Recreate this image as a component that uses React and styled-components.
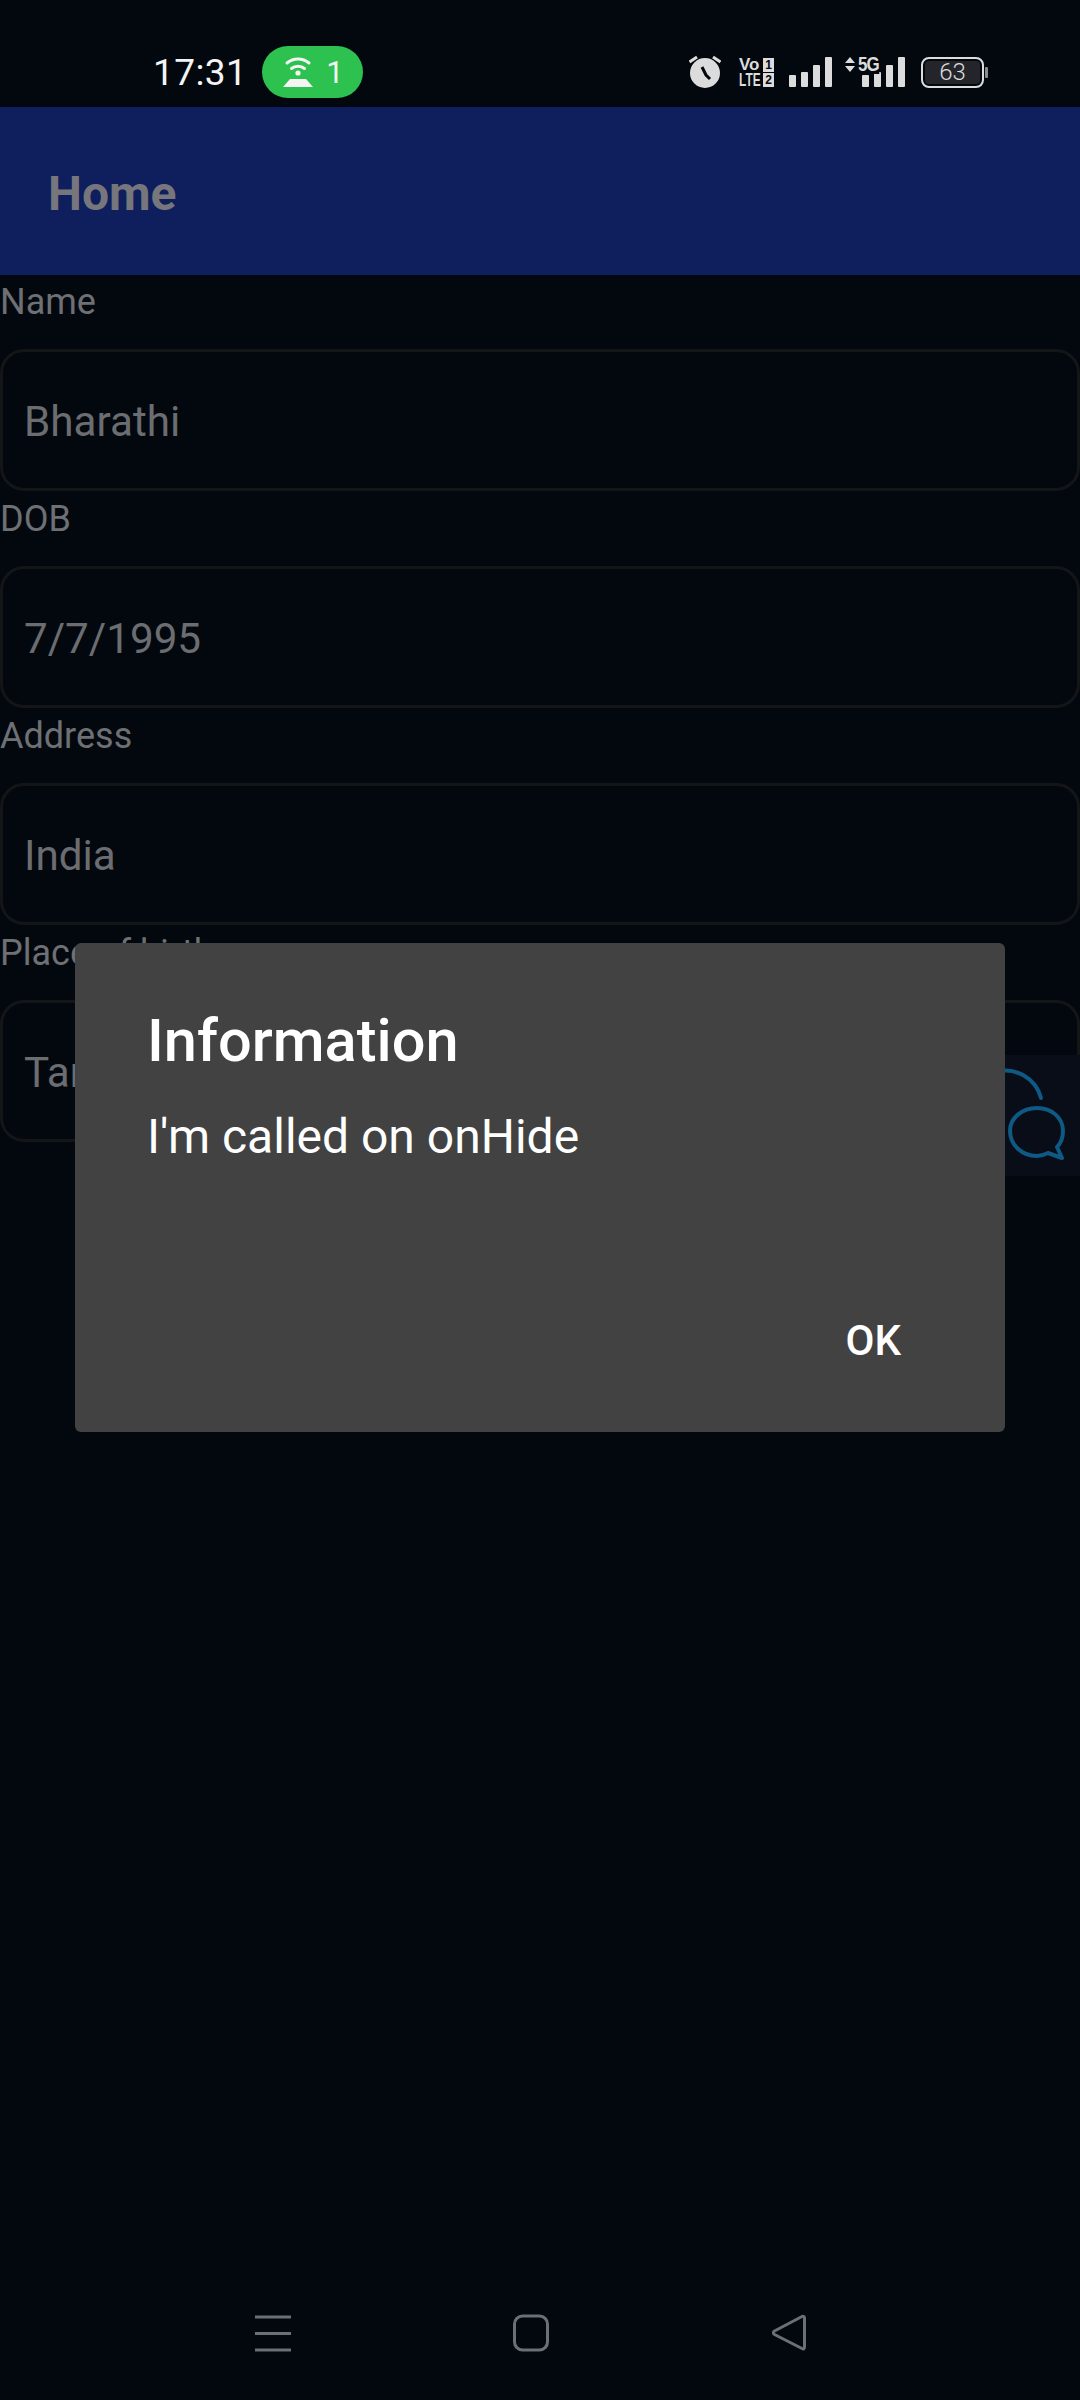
import React from "react";
import styled, { createGlobalStyle } from "styled-components";

const GlobalStyle = createGlobalStyle`
  html, body { margin: 0; padding: 0; background: #03080f; }
  * { box-sizing: border-box; }
`;

const Screen = styled.div`
  position: relative;
  width: 1080px;
  height: 2400px;
  display: flex;
  flex-direction: column;
  overflow: hidden;
  background: #03080f;
  font-family: Roboto, "Liberation Sans", sans-serif;
`;

const StatusBar = styled.div`
  height: 107px;
  flex: none;
  display: flex;
  align-items: center;
  padding: 37px 92px 0 153px;
  color: #f2f2f2;
`;

const Clock = styled.span`
  font-size: 37px;
  letter-spacing: 0.4px;
  color: #f4f4f4;
`;

const HotspotPill = styled.div`
  width: 101px;
  height: 52px;
  margin-left: 15px;
  border-radius: 26px;
  background: #2dc14f;
  display: flex;
  align-items: center;
  padding-left: 21px;
  gap: 13px;
  font-size: 31px;
  color: #f4f4f4;
`;

const StatusIcons = styled.div`
  margin-left: auto;
  display: flex;
  align-items: center;
  color: #dcdcdc;
`;

const VoLte = styled.div`
  width: 35px;
  margin-left: 18px;
  display: grid;
  grid-template-columns: 22px 11px;
  column-gap: 2px;
  row-gap: 1px;
  font-family: "Liberation Sans", sans-serif;
  font-weight: 700;
  line-height: 14px;
`;

const VoText = styled.span`
  font-size: 17px;
  white-space: nowrap;
`;

const LteText = styled.span`
  font-size: 18px;
  white-space: nowrap;
  transform: scaleX(0.66);
  transform-origin: left center;
`;

const SimTag = styled.span`
  width: 11px;
  height: 14px;
  background: #dcdcdc;
  color: #05070f;
  font-size: 12px;
  line-height: 14px;
  text-align: center;
`;

const Bars = styled.div`
  display: flex;
  align-items: flex-end;
  gap: 5px;
  height: 30px;
  margin-left: ${(p) => p.$gap}px;
`;

const Bar = styled.span`
  width: 7px;
  height: ${(p) => p.$h}px;
  background: #dcdcdc;
  border-radius: 1px;
`;

const FiveG = styled.div`
  position: relative;
  display: flex;
  align-items: flex-start;
  margin-left: 12px;
  height: 30px;
`;

const FiveGLabel = styled.span`
  position: absolute;
  left: 14px;
  top: -3px;
  font-family: "Liberation Sans", sans-serif;
  font-weight: 700;
  font-size: 20px;
  line-height: 20px;
  letter-spacing: -1px;
  color: #dcdcdc;
  background: #03080f;
  transform: scaleX(0.85);
  transform-origin: left center;
`;

const Battery = styled.div`
  width: 63px;
  height: 31px;
  margin-left: 16px;
  border: 2px solid #dcdcdc;
  border-radius: 8px;
  padding: 2px;
`;

const BatteryFill = styled.div`
  height: 100%;
  border-radius: 4px;
  background: #23252b;
  display: flex;
  align-items: center;
  justify-content: center;
  font-size: 24px;
  font-weight: 300;
  color: #dcdcdc;
`;

const BatteryCap = styled.span`
  width: 3px;
  height: 11px;
  margin-left: 1px;
  background: #8b8b8b;
  border-radius: 1px;
`;

const AppBar = styled.header`
  height: 168px;
  flex: none;
  display: flex;
  align-items: center;
  padding: 4px 0 0 48px;
  background: #0f1f5e;
  font-size: 48px;
  font-weight: 700;
  color: #76767c;
`;

const Form = styled.main`
  flex: 1;
`;

const Field = styled.div`
  height: 217px;
`;

const Label = styled.div`
  height: 54px;
  line-height: 54px;
  font-size: 36px;
  color: #6e7074;
`;

const InputBox = styled.div`
  height: 142px;
  margin-top: 20px;
  padding: 2px 0 0 21px;
  border: 3px solid #141517;
  border-radius: 24px;
  display: flex;
  align-items: center;
  font-size: 42.2px;
  color: #6b6d71;
`;

const ChatBadge = styled.div`
  position: absolute;
  left: 950px;
  top: 1055px;
  width: 130px;
  height: 121px;
  background: #090d17;
`;

const Dialog = styled.div`
  position: absolute;
  left: 75px;
  top: 943px;
  width: 930px;
  height: 489px;
  padding: 65px 72px 0;
  border-radius: 6px;
  background: #424242;
  display: flex;
  flex-direction: column;
  color: #fff;
`;

const DialogTitle = styled.div`
  font-size: 59.5px;
  font-weight: 500;
  line-height: 66px;
`;

const DialogBody = styled.div`
  margin-top: 30px;
  font-size: 48px;
  line-height: 66px;
`;

const DialogAction = styled.div`
  position: absolute;
  right: 104px;
  top: 373px;
  font-size: 42px;
  font-weight: 500;
  line-height: 50px;
`;

const NavBar = styled.nav`
  height: 134px;
  flex: none;
  display: flex;
  align-items: center;
  padding-left: 255px;
`;

const NavIcon = styled.svg`
  display: block;
  flex: none;
  margin-left: ${(p) => p.$gap || 0}px;
`;

const fields = [
  ["Name", "Bharathi"],
  ["DOB", "7/7/1995"],
  ["Address", "India"],
  ["Place of birth", "Tamilnadu"],
];

export default function App() {
  return (
    <Screen>
      <GlobalStyle />
      <StatusBar>
        <Clock>17:31</Clock>
        <HotspotPill>
          <svg width="30" height="30" viewBox="0 0 30 30" fill="none">
            <path d="M4 6C10.500 0.500 19.500 0.500 26 6" stroke="#f4f4f4" strokeWidth="3" strokeLinecap="round" />
            <path d="M8.500 11.500C12 8.500 18 8.500 21.500 11.500" stroke="#f4f4f4" strokeWidth="3" strokeLinecap="round" />
            <circle cx="15" cy="16" r="2.600" fill="#f4f4f4" />
            <path d="M7 22H23L30 30H0Z" fill="#f4f4f4" />
          </svg>
          <span>1</span>
        </HotspotPill>
        <StatusIcons>
          <svg width="32" height="34" viewBox="0 0 32 34">
            <circle cx="16" cy="18" r="15" fill="#dcdcdc" />
            <path d="M13 12L17 20L21 24" stroke="#05070f" strokeWidth="3" fill="none" />
            <path d="M0.500 7L8 2M31.500 7L24 2" stroke="#dcdcdc" strokeWidth="3" />
          </svg>
          <VoLte>
            <VoText>Vo</VoText>
            <SimTag>1</SimTag>
            <LteText>LTE</LteText>
            <SimTag>2</SimTag>
          </VoLte>
          <Bars $gap={15}>
            <Bar $h={12} />
            <Bar $h={15} />
            <Bar $h={22} />
            <Bar $h={30} />
          </Bars>
          <FiveG>
            <svg width="12" height="16" viewBox="0 0 12 16">
              <path d="M6 0L11 6H1Z M6 15L1 9H11Z" fill="#dcdcdc" />
            </svg>
            <Bars $gap={6}>
              <Bar $h={12} />
              <Bar $h={15} />
              <Bar $h={22} />
              <Bar $h={30} />
            </Bars>
            <FiveGLabel>5G</FiveGLabel>
          </FiveG>
          <Battery>
            <BatteryFill>63</BatteryFill>
          </Battery>
          <BatteryCap />
        </StatusIcons>
      </StatusBar>

      <AppBar>Home</AppBar>

      <Form>
        {fields.map(([label, value]) => (
          <Field key={label}>
            <Label>{label}</Label>
            <InputBox>{value}</InputBox>
          </Field>
        ))}
      </Form>

      <ChatBadge>
        <svg width="130" height="121" viewBox="0 0 130 121" fill="none">
          <path d="M45 17A37 37 0 0 1 91 43" stroke="#0e5a85" strokeWidth="4" strokeLinecap="round" />
          <path d="M87 101C72 101 60 90 60 76C60 63 72 53 87 53C102 53 113 63 113 76C113 82 111 88 107 92L112 103L98 98C94 100 91 101 87 101Z" stroke="#0e5a85" strokeWidth="4" strokeLinejoin="round" />
        </svg>
      </ChatBadge>

      <Dialog>
        <DialogTitle>Information</DialogTitle>
        <DialogBody>I'm called on onHide</DialogBody>
        <DialogAction>OK</DialogAction>
      </Dialog>

      <NavBar>
        <NavIcon width="36" height="38" viewBox="0 0 36 38">
          <path d="M0 3H36M0 19.500H36M0 36H36" stroke="#6c6f74" strokeWidth="3" />
        </NavIcon>
        <NavIcon $gap={222} width="36" height="38" viewBox="0 0 36 38">
          <rect x="1.500" y="2" width="33" height="34" rx="8" stroke="#6c6f74" strokeWidth="3" fill="none" />
        </NavIcon>
        <NavIcon $gap={222} width="36" height="38" viewBox="0 0 36 38">
          <path d="M31 2.500C32.500 2 33.500 2.800 33.500 4V33C33.500 34.500 32.500 35.500 31 34.500L3.500 20.500C2 19.500 2 18 3.500 17Z" stroke="#6c6f74" strokeWidth="3" fill="none" strokeLinejoin="round" />
        </NavIcon>
      </NavBar>
    </Screen>
  );
}
